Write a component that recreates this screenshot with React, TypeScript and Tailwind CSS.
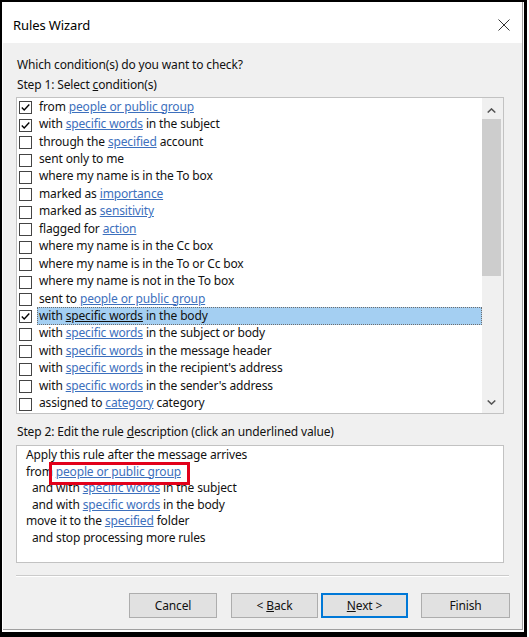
import React from "react";

type Seg = { t: string; link?: boolean };
const L = (t: string): Seg => ({ t, link: true });
const T = (t: string): Seg => ({ t });

const rows: { checked: boolean; segs: Seg[] }[] = [
  { checked: true, segs: [T("from "), L("people or public group")] },
  { checked: true, segs: [T("with "), L("specific words"), T(" in the subject")] },
  { checked: false, segs: [T("through the "), L("specified"), T(" account")] },
  { checked: false, segs: [T("sent only to me")] },
  { checked: false, segs: [T("where my name is in the To box")] },
  { checked: false, segs: [T("marked as "), L("importance")] },
  { checked: false, segs: [T("marked as "), L("sensitivity")] },
  { checked: false, segs: [T("flagged for "), L("action")] },
  { checked: false, segs: [T("where my name is in the Cc box")] },
  { checked: false, segs: [T("where my name is in the To or Cc box")] },
  { checked: false, segs: [T("where my name is not in the To box")] },
  { checked: false, segs: [T("sent to "), L("people or public group")] },
  { checked: true, segs: [T("with "), L("specific words"), T(" in the body")] },
  { checked: false, segs: [T("with "), L("specific words"), T(" in the subject or body")] },
  { checked: false, segs: [T("with "), L("specific words"), T(" in the message header")] },
  { checked: false, segs: [T("with "), L("specific words"), T(" in the recipient's address")] },
  { checked: false, segs: [T("with "), L("specific words"), T(" in the sender's address")] },
  { checked: false, segs: [T("assigned to "), L("category"), T(" category")] },
];

const SELECTED = 12;

function Checkbox({ checked }: { checked: boolean }) {
  return (
    <div className="w-[13px] h-[13px] border border-[#444] bg-white shrink-0 translate-y-[1px] flex items-center justify-center">
      {checked && (
        <svg width="11" height="11" viewBox="0 0 11 11">
          <path d="M1.8 5.6 L4.2 8 L9.3 2.6" fill="none" stroke="#000" strokeWidth="1.4" />
        </svg>
      )}
    </div>
  );
}

function Btn({ w, children, primary }: { w: string; children: React.ReactNode; primary?: boolean }) {
  return (
    <div
      className={`${w} h-[25px] flex items-center justify-center bg-[#e1e1e1] text-[12px] text-[#111] ${
        primary ? "border-2 border-[#0078d7]" : "border border-[#adadad]"
      }`}
    >
      <span className="whitespace-pre">{children}</span>
    </div>
  );
}

export default function App() {
  return (
    <div
      className="w-[529px] h-[637px] bg-white"
      style={{ fontFamily: '"Noto Sans", "Open Sans", sans-serif' }}
    >
      <div className="w-[527px] h-[637px] bg-black pt-[2px] pl-[2px] pr-[3px] pb-[5px]">
        <div className="h-full bg-white pl-[1px] pr-[1px] pb-[2px]">
          <div className="h-full flex flex-col border-r border-b border-[#a0a0a0] bg-[#f0f0f0]">
            {/* title bar */}
            <div className="h-[41px] bg-white flex items-start justify-between pl-[10px] pr-[12px]">
              <div className="pt-[14px] text-[13px] leading-[18px] text-black tracking-[-0.1px]">Rules Wizard</div>
              <svg width="12" height="12" viewBox="0 0 12 12" className="mt-[17px]">
                <path d="M0.5 0.5 L11.5 11.5 M11.5 0.5 L0.5 11.5" stroke="#333" strokeWidth="1" fill="none" />
              </svg>
            </div>

            {/* body */}
            <div className="flex-1 flex flex-col pt-[14px] pl-[13px] pr-[12px] text-[12px] text-[#111] tracking-[-0.15px]">
              <div className="leading-[16px] pl-[1px]">Which condition(s) do you want to check?</div>
              <div className="leading-[16px] pl-[1px] mt-[4px]">
                Step 1: Select <span className="underline">c</span>ondition(s)
              </div>

              {/* list box */}
              <div className="mt-[4px] w-[488px] h-[317px] border border-[#c2c2c2] bg-white flex">
                <div className="flex-1 flex flex-col">
                  {rows.map((r, i) => {
                    const sel = i === SELECTED;
                    return (
                      <div key={i} className="h-[17.45px] flex items-center pl-[2px]">
                        <Checkbox checked={r.checked} />
                        <div
                          className={`ml-[5px] flex-1 h-full flex items-center pl-[1px] border whitespace-pre leading-[16px] ${
                            sel ? "bg-[#a4cff2] border-dotted border-[#6e6e6e]" : "border-transparent"
                          }`}
                        >
                          {r.segs.map((s, j) =>
                            s.link ? (
                              <span
                                key={j}
                                className={`underline ${sel ? "text-[#111]" : "text-[#3d70bd]"}`}
                              >
                                {s.t}
                              </span>
                            ) : (
                              <span key={j}>{s.t}</span>
                            )
                          )}
                        </div>
                      </div>
                    );
                  })}
                </div>
                {/* scrollbar */}
                <div className="w-[21px] bg-[#f0f0f0] flex flex-col pr-[2px]">
                  <div className="h-[21px] flex justify-center pt-[10px]">
                    <svg width="9" height="5" viewBox="0 0 9 5">
                      <path d="M0.7 4.5 L4.5 0.9 L8.3 4.5" fill="none" stroke="#555" strokeWidth="1.5" />
                    </svg>
                  </div>
                  <div className="h-[157px] bg-[#cdcdcd]" />
                  <div className="flex-1" />
                  <div className="h-[21px] flex justify-center pt-[8px]">
                    <svg width="9" height="5" viewBox="0 0 9 5">
                      <path d="M0.7 0.5 L4.5 4.1 L8.3 0.5" fill="none" stroke="#555" strokeWidth="1.5" />
                    </svg>
                  </div>
                </div>
              </div>

              <div className="leading-[16px] pl-[1px] mt-[10px]">
                Step 2: Edit the rule <span className="underline">d</span>escription (click an underlined value)
              </div>

              {/* description box */}
              <div className="relative mt-[5px] w-[488px] h-[118px] border border-[#c2c2c2] bg-white pt-[1px] pl-[9px] leading-[16.6px] whitespace-pre">
                <div>Apply this rule after the message arrives</div>
                <div>
                  from <span className="underline text-[#3d70bd]">people or public group</span>
                </div>
                <div className="pl-[6px]">
                  and with <span className="underline text-[#3d70bd]">specific words</span> in the subject
                </div>
                <div className="pl-[6px]">
                  and with <span className="underline text-[#3d70bd]">specific words</span> in the body
                </div>
                <div>
                  move it to the <span className="underline text-[#3d70bd]">specified</span> folder
                </div>
                <div className="pl-[6px]">and stop processing more rules</div>
                <div className="absolute left-[32px] top-[16px] w-[141px] h-[23px] border-[3px] border-[#e2001a] pointer-events-none" />
              </div>

              {/* separator */}
              <div className="mt-[12px] w-[493px] h-[2px] border-t border-[#cbcbcb] border-b border-b-white" />

              {/* buttons */}
              <div className="mt-[16px] flex justify-end">
                <Btn w="w-[88px]">Cancel</Btn>
                <div className="w-[14px]" />
                <Btn w="w-[87px]">
                  {"< "}
                  <span className="underline">B</span>ack
                </Btn>
                <div className="w-[3px]" />
                <Btn w="w-[87px]" primary>
                  <span className="underline">N</span>
                  {"ext >"}
                </Btn>
                <div className="w-[13px]" />
                <Btn w="w-[89px]">Finish</Btn>
              </div>
            </div>
          </div>
        </div>
      </div>
    </div>
  );
}
